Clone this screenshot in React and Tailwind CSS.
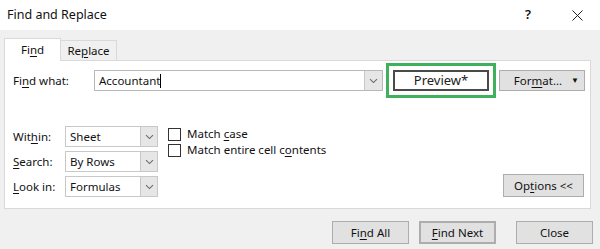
import React from "react";

const U = ({ children }) => <span className="underline underline-offset-2">{children}</span>;

function Chevron() {
  return (
    <svg width="9" height="6" viewBox="0 0 9 6" fill="none">
      <path d="M1 1.2 L4.5 4.6 L8 1.2" stroke="#6b6b6b" strokeWidth="1.1" />
    </svg>
  );
}

function Combo({ value, width }) {
  return (
    <div className={`flex h-[21px] ${width} border border-[#c8c8c8] bg-white`}>
      <div className="flex-1 flex items-center pl-[4px] truncate">{value}</div>
      <div className="w-[17px] flex items-center justify-center bg-[#e6e6e6] border-l border-[#c8c8c8]">
        <Chevron />
      </div>
    </div>
  );
}

function Btn({ children, className = "" }) {
  return (
    <div className={`flex items-center justify-center bg-[#e1e1e1] border border-[#adadad] ${className}`}>
      {children}
    </div>
  );
}

function Check({ children }) {
  return (
    <div className="flex items-center h-[16px]">
      <div className="w-[13px] h-[13px] border border-[#333] bg-white" />
      <span className="ml-[6px]">{children}</span>
    </div>
  );
}

export default function App() {
  return (
    <div className="w-[600px] h-[249px] bg-[#f0f0f0] overflow-hidden text-[11.5px] text-[#111] font-['Noto_Sans','Open_Sans',sans-serif]">
      {/* title bar */}
      <div className="h-[30px] bg-white flex items-center justify-between pl-[7px] pr-[17px]">
        <span className="text-[12.5px]">Find and Replace</span>
        <div className="flex items-center gap-[41px]">
          <span className="text-[13px] font-semibold">?</span>
          <svg width="11" height="11" viewBox="0 0 11 11">
            <path d="M0.5 0.5 L10.5 10.5 M10.5 0.5 L0.5 10.5" stroke="#222" strokeWidth="1" />
          </svg>
        </div>
      </div>

      {/* tabs */}
      <div className="h-[30px] flex items-end pl-[4px]">
        <div className="relative z-10 -mb-px w-[57px] h-[23px] bg-white border border-b-0 border-[#d9d9d9] flex items-center justify-center pb-[1px]">
          Fi<U>n</U>d
        </div>
        <div className="w-[56px] h-[20px] bg-[#f0f0f0] border border-l-0 border-b-0 border-[#d9d9d9] flex items-center justify-center">
          Re<U>p</U>lace
        </div>
      </div>

      {/* panel */}
      <div className="ml-[4px] w-[587px] h-[149px] bg-white border border-[#d9d9d9] flex flex-col">
        <div className="flex items-center pl-[8px] pt-[2px]">
          <span className="w-[81px]">Fi<U>n</U>d what:</span>
          <div className="flex h-[21px] w-[289px] border border-[#b8b8b8]">
            <div className="flex-1 flex items-center pl-[4px]">
              Accountant<span className="w-px h-[14px] bg-black" />
            </div>
            <div className="w-[18px] flex items-center justify-center bg-[#e6e6e6] border-l border-[#c8c8c8]">
              <Chevron />
            </div>
          </div>
          <div className="ml-[3px] w-[110px] h-[35px] border-[3px] border-[#3fb05c] flex items-center justify-center">
            <div className="w-[96px] h-[21px] border-2 border-[#4a4a4a] flex items-center justify-center text-[13px] text-[#222]">
              Preview*
            </div>
          </div>
          <Btn className="ml-[3px] w-[86px] h-[21px] relative">
            <span className="-ml-[8px]">For<U>m</U>at...</span>
            <span className="absolute right-[5px] top-[3px] text-[8px]">▼</span>
          </Btn>
        </div>

        <div className="flex mt-[28px] pl-[8px] pr-[6px]">
          <div className="grid grid-cols-[52px_93px] gap-y-[4px] items-center">
            <span>Wit<U>h</U>in:</span>
            <Combo value="Sheet" width="w-[93px]" />
            <span><U>S</U>earch:</span>
            <Combo value="By Rows" width="w-[93px]" />
            <span><U>L</U>ook in:</span>
            <Combo value="Formulas" width="w-[93px]" />
          </div>
          <div className="ml-[10px] flex flex-col">
            <Check>Match <U>c</U>ase</Check>
            <Check>Match entire cell c<U>o</U>ntents</Check>
          </div>
          <div className="flex-1 flex items-end justify-end">
            <Btn className="w-[81px] h-[23px]">Op<U>t</U>ions &lt;&lt;</Btn>
          </div>
        </div>
      </div>

      {/* bottom buttons */}
      <div className="flex mt-[12px] pl-[332px]">
        <Btn className="w-[77px] h-[23px]">Fi<U>n</U>d All</Btn>
        <Btn className="ml-[10px] w-[77px] h-[23px] border-[#0078d7] border-2">
          <U>F</U>ind Next
        </Btn>
        <Btn className="ml-[20px] w-[77px] h-[23px]">Close</Btn>
      </div>
    </div>
  );
}
